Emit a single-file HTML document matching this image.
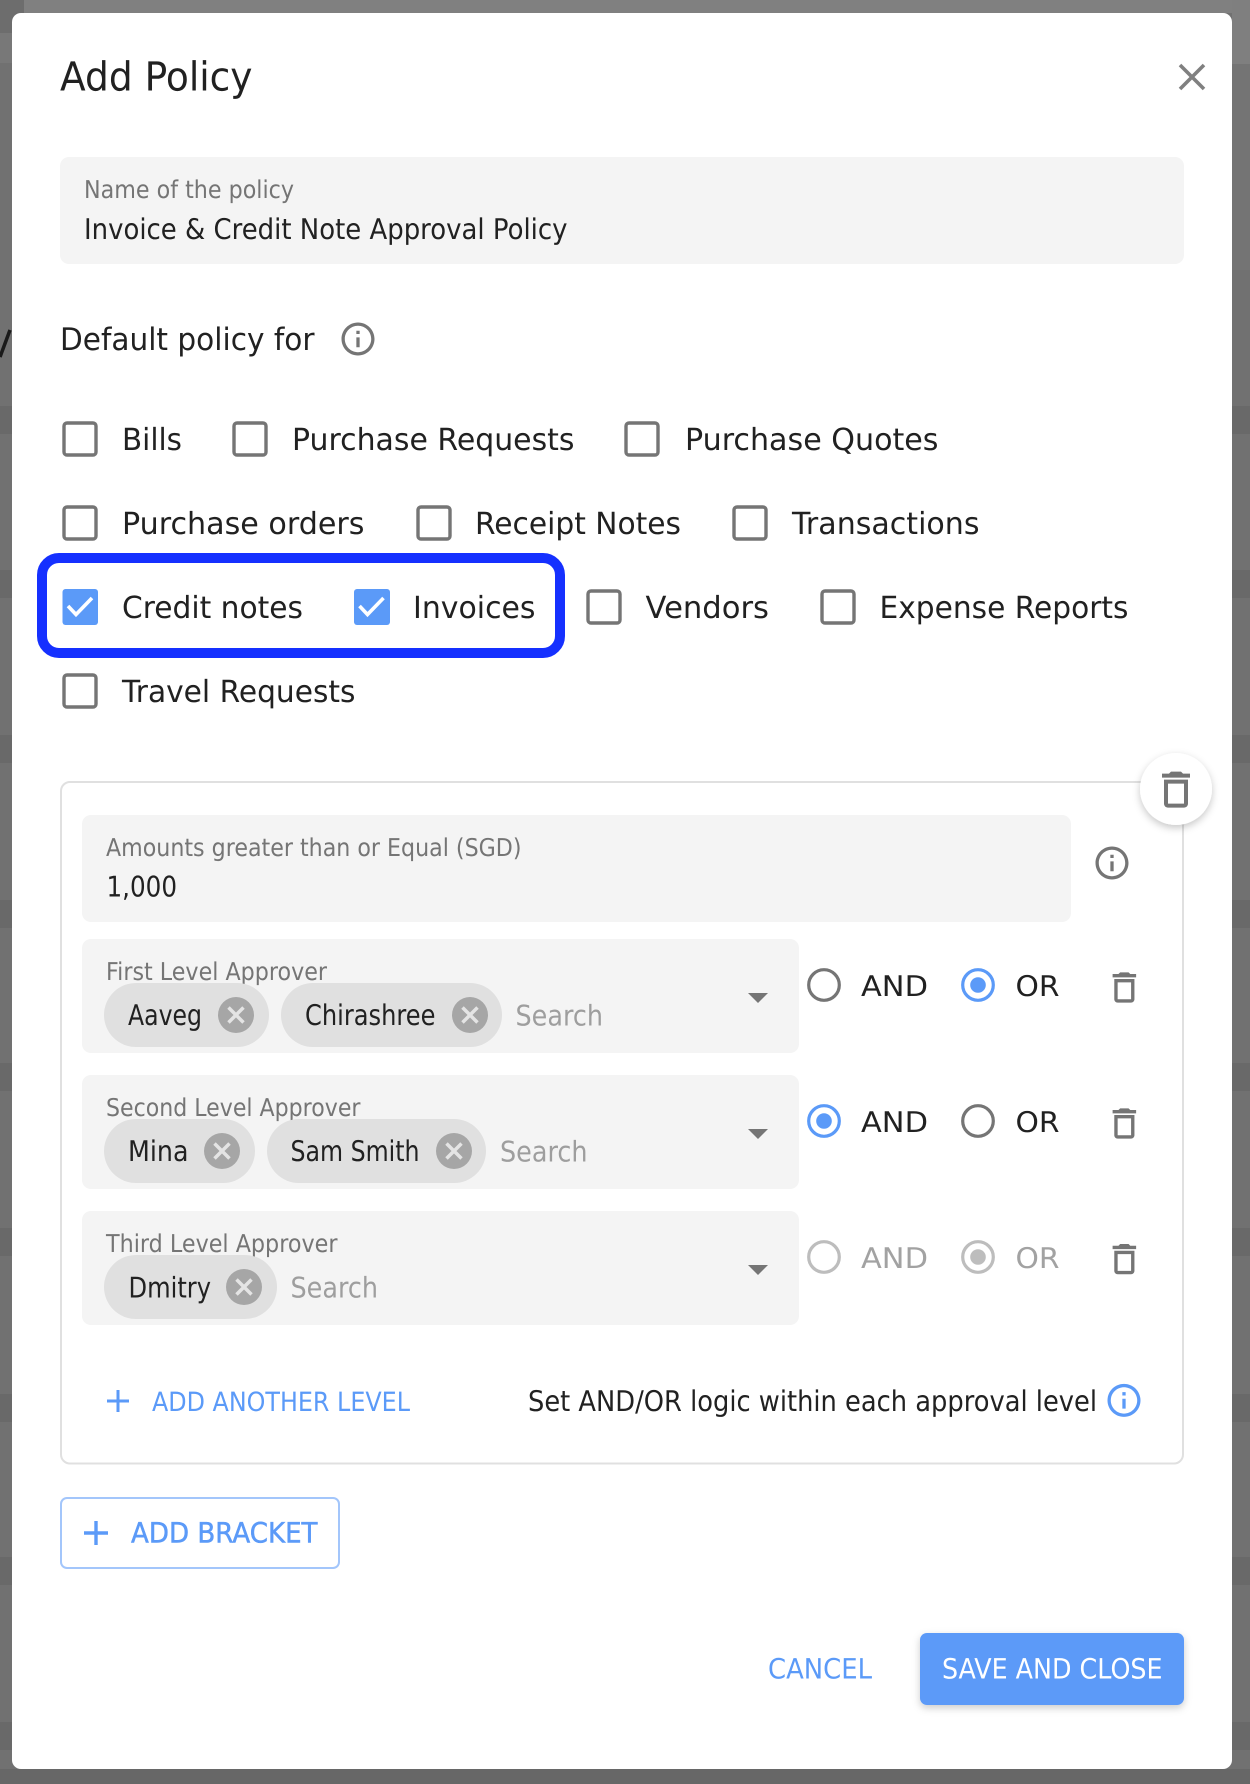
<!DOCTYPE html>
<html lang="en">
<head>
<meta charset="utf-8">
<title>Add Policy</title>
<style>
html,body{margin:0;padding:0;background:#717171;width:1250px;height:1784px;overflow:hidden}
svg{display:block}
text{font-family:"DejaVu Sans","Liberation Sans",sans-serif;fill:#212121;font-size:30.5px;text-rendering:geometricPrecision}
.lb{font-size:24.5px;fill:#757575}
.val{font-size:28.5px}
.chip{font-size:28.5px;fill:#212121}
.sr{font-size:28.5px;fill:#9e9e9e}
.bl{fill:#5b9af8}
.box{fill:#fff;stroke:#757575;stroke-width:3.4}
.f{fill:#f4f4f4}
.g{fill:#757575}
.ao{font-size:28.5px}
</style>
</head>
<body>
<svg width="1250" height="1784" viewBox="0 0 1250 1784" xmlns="http://www.w3.org/2000/svg">
<defs>
<filter id="s1" x="-30%" y="-30%" width="160%" height="170%"><feDropShadow dx="0" dy="3" stdDeviation="4" flood-color="#000" flood-opacity=".22"/></filter>
<filter id="s2" x="-10%" y="-20%" width="120%" height="150%"><feDropShadow dx="0" dy="3" stdDeviation="4" flood-color="#000" flood-opacity=".2"/></filter>
<path id="trash" d="M6 19c0 1.100.9 2 2 2h8c1.100 0 2-.9 2-2V7H6v12zM8 9h8v10H8V9zm7.500-5l-1-1h-5l-1 1H5v2h14V4z"/>
<path id="info" d="M11 7h2v2h-2zm0 4h2v6h-2zm1-9C6.480 2 2 6.480 2 12s4.480 10 10 10 10-4.480 10-10S17.520 2 12 2zm0 18c-4.410 0-8-3.590-8-8s3.590-8 8-8 8 3.590 8 8-3.590 8-8 8z"/>
</defs>

<!-- backdrop -->
<rect width="1250" height="1784" fill="#717171"/>
<rect x="24" y="0" width="1226" height="13" fill="#808080"/>
<rect x="0" y="0" width="24" height="33" fill="#6d6d6d"/>
<rect x="1232" y="0" width="18" height="64" fill="#7f7f7f"/>
<rect x="0" y="33" width="12" height="30" fill="#787878"/>
<rect x="1232" y="64" width="18" height="206" fill="#747474"/>
<g fill="#696969">
<rect y="406" width="1250" height="28"/><rect y="570" width="1250" height="28"/>
<rect y="735" width="1250" height="28"/><rect y="900" width="1250" height="28"/>
<rect y="1063" width="1250" height="28"/><rect y="1228" width="1250" height="28"/>
<rect y="1394" width="1250" height="28"/><rect y="1557" width="1250" height="28"/>
<rect y="1722" width="1250" height="28"/>
</g>
<rect y="1769" width="1250" height="15" fill="#676767"/>
<path d="M10 330L0 357" stroke="#1a1a1a" stroke-width="3.5"/>

<!-- modal -->
<rect x="12" y="13" width="1220" height="1756" rx="9" fill="#fff"/>

<text x="60" y="90.500" style="font-size:40px" textLength="192.500" lengthAdjust="spacingAndGlyphs">Add Policy</text>
<path d="M1180 65L1204 89M1204 65L1180 89" stroke="#808080" stroke-width="3.6" fill="none"/>

<!-- name -->
<rect class="f" x="60" y="157" width="1124" height="107" rx="9"/>
<text class="lb" x="84" y="198" textLength="210" lengthAdjust="spacingAndGlyphs">Name of the policy</text>
<text class="val" x="84" y="239" textLength="483.500" lengthAdjust="spacingAndGlyphs">Invoice &amp; Credit Note Approval Policy</text>

<text x="60" y="350" style="font-size:31px" textLength="254.500" lengthAdjust="spacingAndGlyphs">Default policy for</text>
<use href="#info" class="g" transform="translate(338.200 319.200) scale(1.650)"/>

<!-- checkbox rows -->
<rect class="box" x="64" y="423" width="32" height="32" rx="3"/>
<text x="122" y="450" textLength="60" lengthAdjust="spacingAndGlyphs">Bills</text>
<rect class="box" x="234" y="423" width="32" height="32" rx="3"/>
<text x="292" y="450" textLength="282.500" lengthAdjust="spacingAndGlyphs">Purchase Requests</text>
<rect class="box" x="626" y="423" width="32" height="32" rx="3"/>
<text x="685" y="450" textLength="253.500" lengthAdjust="spacingAndGlyphs">Purchase Quotes</text>

<rect class="box" x="64" y="507" width="32" height="32" rx="3"/>
<text x="122" y="534" textLength="242.500" lengthAdjust="spacingAndGlyphs">Purchase orders</text>
<rect class="box" x="418" y="507" width="32" height="32" rx="3"/>
<text x="475" y="534" textLength="206" lengthAdjust="spacingAndGlyphs">Receipt Notes</text>
<rect class="box" x="734" y="507" width="32" height="32" rx="3"/>
<text x="792" y="534" textLength="187.500" lengthAdjust="spacingAndGlyphs">Transactions</text>

<rect x="42" y="558" width="518" height="95" rx="17" fill="none" stroke="#1530ff" stroke-width="10"/>
<rect x="62.500" y="589" width="35.500" height="36" rx="3" fill="#5b9af8"/>
<path d="M68 606L76 614.500L92 598" fill="none" stroke="#fff" stroke-width="3.600"/>
<text x="122" y="618" textLength="181" lengthAdjust="spacingAndGlyphs">Credit notes</text>
<rect x="354" y="589" width="36" height="36" rx="3" fill="#5b9af8"/>
<path d="M359.500 606L367.500 614.500L383.500 598" fill="none" stroke="#fff" stroke-width="3.600"/>
<text x="413" y="618" textLength="122.500" lengthAdjust="spacingAndGlyphs">Invoices</text>
<rect class="box" x="588" y="591" width="32" height="32" rx="3"/>
<text x="645.500" y="618" textLength="123.500" lengthAdjust="spacingAndGlyphs">Vendors</text>
<rect class="box" x="822" y="591" width="32" height="32" rx="3"/>
<text x="879.500" y="618" textLength="249" lengthAdjust="spacingAndGlyphs">Expense Reports</text>

<rect class="box" x="64" y="675" width="32" height="32" rx="3"/>
<text x="122" y="702" textLength="233.500" lengthAdjust="spacingAndGlyphs">Travel Requests</text>

<!-- bracket card -->
<rect x="61" y="782" width="1122" height="681.500" rx="9" fill="#fff" stroke="#e0e0e0" stroke-width="2"/>
<circle cx="1176" cy="789" r="36" fill="#fff" filter="url(#s1)"/>
<use href="#trash" class="g" transform="translate(1152 765.600) scale(2)"/>

<rect class="f" x="82" y="815" width="989" height="107" rx="9"/>
<text class="lb" x="106" y="856" textLength="415.500" lengthAdjust="spacingAndGlyphs">Amounts greater than or Equal (SGD)</text>
<text class="val" x="106.500" y="896.500" textLength="70.500" lengthAdjust="spacingAndGlyphs">1,000</text>
<use href="#info" class="g" transform="translate(1092.200 843.200) scale(1.650)"/>

<!-- level 1 -->
<rect class="f" x="82" y="939" width="717" height="114" rx="9"/>
<text class="lb" x="106" y="980" textLength="221" lengthAdjust="spacingAndGlyphs">First Level Approver</text>
<rect x="104" y="983" width="165" height="64" rx="32" fill="#e0e0e0"/>
<text class="chip" x="128" y="1025" textLength="74" lengthAdjust="spacingAndGlyphs">Aaveg</text>
<circle cx="236" cy="1015" r="18" fill="#a6a6a6"/>
<path d="M228.500 1007.500l15 15m0-15l-15 15" stroke="#e4e4e4" stroke-width="3.500"/>
<rect x="281" y="983" width="221" height="64" rx="32" fill="#e0e0e0"/>
<text class="chip" x="305" y="1025" textLength="130.500" lengthAdjust="spacingAndGlyphs">Chirashree</text>
<circle cx="470" cy="1015" r="18" fill="#a6a6a6"/>
<path d="M462.500 1007.500l15 15m0-15l-15 15" stroke="#e4e4e4" stroke-width="3.500"/>
<text class="sr" x="515.500" y="1025.500" textLength="87.500" lengthAdjust="spacingAndGlyphs">Search</text>
<path d="M748 993h20l-10 10z" class="g"/>
<circle cx="824" cy="985" r="15.300" fill="#fff" stroke="#757575" stroke-width="3.200"/>
<text class="ao" x="861" y="996" textLength="67" lengthAdjust="spacingAndGlyphs">AND</text>
<circle cx="978" cy="985" r="15.300" fill="#fff" stroke="#5b9af8" stroke-width="3.200"/>
<circle cx="978" cy="985" r="7.800" fill="#5b9af8"/>
<text class="ao" x="1015.500" y="996" textLength="44" lengthAdjust="spacingAndGlyphs">OR</text>
<use href="#trash" class="g" transform="translate(1104.200 967.300) scale(1.680)"/>

<!-- level 2 -->
<rect class="f" x="82" y="1075" width="717" height="114" rx="9"/>
<text class="lb" x="106" y="1116" textLength="254.500" lengthAdjust="spacingAndGlyphs">Second Level Approver</text>
<rect x="104" y="1119" width="151" height="64" rx="32" fill="#e0e0e0"/>
<text class="chip" x="128" y="1161" textLength="60.500" lengthAdjust="spacingAndGlyphs">Mina</text>
<circle cx="222" cy="1151" r="18" fill="#a6a6a6"/>
<path d="M214.500 1143.500l15 15m0-15l-15 15" stroke="#e4e4e4" stroke-width="3.500"/>
<rect x="267" y="1119" width="219" height="64" rx="32" fill="#e0e0e0"/>
<text class="chip" x="290.500" y="1161" textLength="129" lengthAdjust="spacingAndGlyphs">Sam Smith</text>
<circle cx="454" cy="1151" r="18" fill="#a6a6a6"/>
<path d="M446.500 1143.500l15 15m0-15l-15 15" stroke="#e4e4e4" stroke-width="3.500"/>
<text class="sr" x="500" y="1161.500" textLength="87.500" lengthAdjust="spacingAndGlyphs">Search</text>
<path d="M748 1129h20l-10 10z" class="g"/>
<circle cx="824" cy="1121" r="15.300" fill="#fff" stroke="#5b9af8" stroke-width="3.200"/>
<circle cx="824" cy="1121" r="7.800" fill="#5b9af8"/>
<text class="ao" x="861" y="1132" textLength="67" lengthAdjust="spacingAndGlyphs">AND</text>
<circle cx="978" cy="1121" r="15.300" fill="#fff" stroke="#757575" stroke-width="3.200"/>
<text class="ao" x="1015.500" y="1132" textLength="44" lengthAdjust="spacingAndGlyphs">OR</text>
<use href="#trash" class="g" transform="translate(1104.200 1103.300) scale(1.680)"/>

<!-- level 3 -->
<rect class="f" x="82" y="1211" width="717" height="114" rx="9"/>
<text class="lb" x="106" y="1252" textLength="231.500" lengthAdjust="spacingAndGlyphs">Third Level Approver</text>
<rect x="104" y="1255" width="173" height="64" rx="32" fill="#e0e0e0"/>
<text class="chip" x="128.500" y="1297.500" textLength="82.500" lengthAdjust="spacingAndGlyphs">Dmitry</text>
<circle cx="244" cy="1287" r="18" fill="#a6a6a6"/>
<path d="M236.500 1279.500l15 15m0-15l-15 15" stroke="#e4e4e4" stroke-width="3.500"/>
<text class="sr" x="290.500" y="1297.500" textLength="87.500" lengthAdjust="spacingAndGlyphs">Search</text>
<path d="M748 1265h20l-10 10z" class="g"/>
<circle cx="824" cy="1257" r="15.300" fill="#fff" stroke="#bdbdbd" stroke-width="3.200"/>
<text class="ao" x="861" y="1268" style="fill:#a2a2a2" textLength="67" lengthAdjust="spacingAndGlyphs">AND</text>
<circle cx="978" cy="1257" r="15.300" fill="#fff" stroke="#bdbdbd" stroke-width="3.200"/>
<circle cx="978" cy="1257" r="7.800" fill="#bdbdbd"/>
<text class="ao" x="1015.500" y="1268" style="fill:#a2a2a2" textLength="44" lengthAdjust="spacingAndGlyphs">OR</text>
<use href="#trash" class="g" transform="translate(1104.200 1239) scale(1.680)"/>

<!-- add level row -->
<path d="M107 1401h22M118 1390v22" stroke="#5b9af8" stroke-width="3" fill="none"/>
<text class="bl" x="152" y="1411" style="font-size:26.500px" textLength="258" lengthAdjust="spacingAndGlyphs">ADD ANOTHER LEVEL</text>
<text x="528" y="1411" style="font-size:28.500px" textLength="569" lengthAdjust="spacingAndGlyphs">Set AND/OR logic within each approval level</text>
<use href="#info" style="fill:#5b9af8" transform="translate(1104.200 1380.600) scale(1.650)"/>

<!-- add bracket -->
<rect x="61" y="1498" width="278" height="70" rx="6" fill="#fff" stroke="#a3c6fb" stroke-width="2"/>
<path d="M84 1533h24M96 1521v24" stroke="#5b9af8" stroke-width="3.400" fill="none"/>
<text class="bl" x="131" y="1542.500" style="font-size:28px;stroke:#5b9af8;stroke-width:.5" textLength="186.500" lengthAdjust="spacingAndGlyphs">ADD BRACKET</text>

<!-- footer -->
<text class="bl" x="768" y="1678.500" style="font-size:28px" textLength="104" lengthAdjust="spacingAndGlyphs">CANCEL</text>
<rect x="920" y="1633" width="264" height="72" rx="7" fill="#5b9af8" filter="url(#s2)"/>
<text x="942" y="1678.500" style="font-size:28px;fill:#fff" textLength="220.500" lengthAdjust="spacingAndGlyphs">SAVE AND CLOSE</text>
</svg>
</body>
</html>
